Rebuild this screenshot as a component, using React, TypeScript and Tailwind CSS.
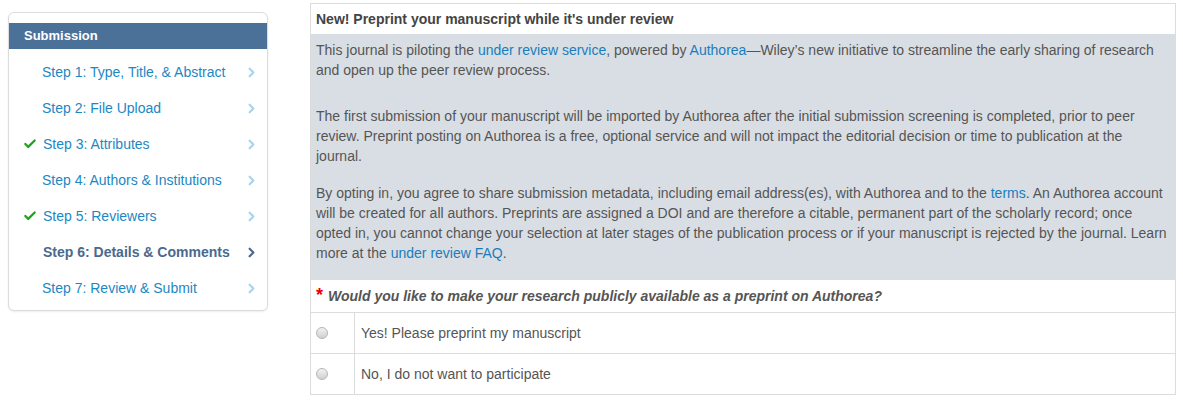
import { Check, ChevronRight } from 'lucide-react';

const steps = [
  { label: 'Step 1: Type, Title, & Abstract', done: false },
  { label: 'Step 2: File Upload', done: false },
  { label: 'Step 3: Attributes', done: true },
  { label: 'Step 4: Authors & Institutions', done: false },
  { label: 'Step 5: Reviewers', done: true },
  { label: 'Step 6: Details & Comments', done: false, current: true },
  { label: 'Step 7: Review & Submit', done: false },
];

function Sidebar() {
  return (
    <div className="self-start w-[260px] mt-[12px] ml-[8px] border border-[#dcdcdc] rounded-md shadow-[0_1px_2px_rgba(0,0,0,0.08)] bg-white pt-[10px] pb-[4px]">
      <div className="h-[26px] bg-[#4b7198] text-white font-bold text-[13px] pl-[15px] flex items-center">
        Submission
      </div>
      <ul className="mt-[5px]">
        {steps.map((s) => (
          <li key={s.label} className="h-[36px] flex items-center pr-[8px]">
            <span className="w-[34px] flex justify-end pr-[6px]">
              {s.done && <Check className="w-[14px] h-[14px] text-[#22a322]" strokeWidth={4} />}
            </span>
            <span
              className={`flex-1 text-[14px] ${
                s.current ? 'font-bold text-[#4a6a8e]' : 'text-[#1b88c4]'
              } ${s.done || s.current ? '' : '-ml-[1px]'}`}
            >
              {s.label}
            </span>
            <ChevronRight
              className={`w-[15px] h-[15px] ${s.current ? 'text-[#4a6a8e]' : 'text-[#a9d3ec]'}`}
              strokeWidth={3.5}
            />
          </li>
        ))}
      </ul>
    </div>
  );
}

function Radio() {
  return (
    <span className="w-[12px] h-[12px] rounded-full border border-[#b5b5b5] bg-gradient-to-b from-[#f2f2f2] to-[#d0d0d0] inline-block" />
  );
}

export default function App() {
  return (
    <div className="w-[1183px] h-[408px] bg-white flex gap-[42px] text-[#555] [font-family:'Liberation_Sans',Arial,sans-serif]">
      <Sidebar />
      <div className="self-start w-[866px] mt-[3px] border border-[#dcdcdc] border-b-0">
        <div className="h-[30px] flex items-center px-[5px] font-bold text-[14px] text-[#444]">
          New! Preprint your manuscript while it's under review
        </div>
        <div className="bg-[#d9dee4] px-[5px] pt-[6px] pb-[17px] text-[14px] leading-[20px]">
          <p>
            This journal is piloting the <a className="text-[#1a7dbb]">under review service</a>, powered by{' '}
            <a className="text-[#1a7dbb]">Authorea</a>—Wiley’s new initiative to streamline the early sharing of research
            and open up the peer review process.
          </p>
          <p className="mt-[26px]">
            The first submission of your manuscript will be imported by Authorea after the initial submission screening is
            completed, prior to peer review. Preprint posting on Authorea is a free, optional service and will not impact
            the editorial decision or time to publication at the journal.
          </p>
          <p className="mt-[17px]">
            By opting in, you agree to share submission metadata, including email address(es), with Authorea and to the{' '}
            <a className="text-[#1a7dbb]">terms</a>. An Authorea account will be created for all authors. Preprints are
            assigned a DOI and are therefore a citable, permanent part of the scholarly record; once opted in, you cannot
            change your selection at later stages of the publication process or if your manuscript is rejected by the
            journal. Learn more at the <a className="text-[#1a7dbb]">under review FAQ</a>.
          </p>
        </div>
        <div className="h-[33px] flex items-center px-[5px] border-b border-[#dcdcdc] text-[14px]">
          <span className="text-[#e00] font-bold text-[18px] leading-none mr-[5px] -mt-[2px]">*</span>
          <span className="font-bold italic text-[#555]">
            Would you like to make your research publicly available as a preprint on Authorea?
          </span>
        </div>
        {['Yes! Please preprint my manuscript', 'No, I do not want to participate'].map((o) => (
          <div key={o} className="h-[41px] flex border-b border-[#dcdcdc] text-[14px]">
            <div className="w-[44px] border-r border-[#dcdcdc] flex items-center pl-[5px]">
              <Radio />
            </div>
            <div className="flex items-center pl-[6px]">{o}</div>
          </div>
        ))}
      </div>
    </div>
  );
}
